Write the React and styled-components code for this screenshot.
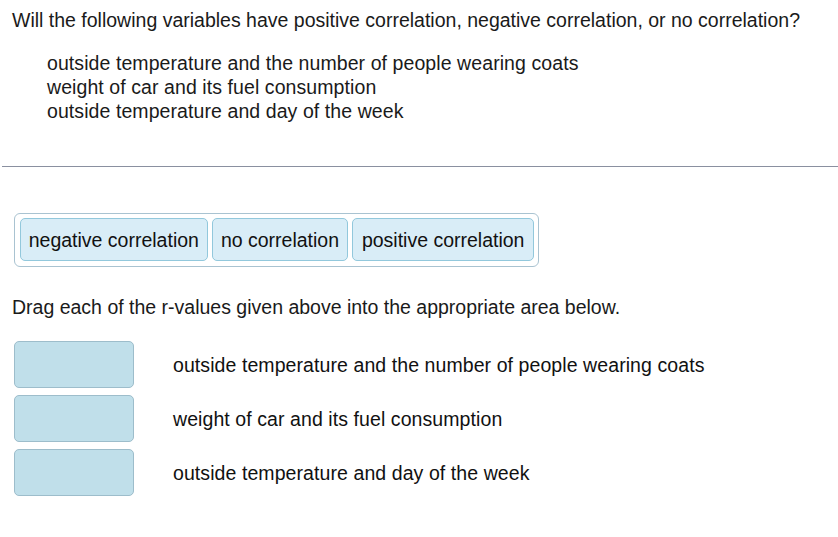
import React from "react";
import styled, { createGlobalStyle } from "styled-components";

const Global = createGlobalStyle`
  html, body { margin: 0; padding: 0; background: #fff; }
  body { font-family: "Liberation Sans", Arial, sans-serif; color: #1a1a1a; }
`;

const Page = styled.div`
  width: 838px;
  padding-top: 8px;
  font-size: 19.5px;
  line-height: 24px;
`;

const Question = styled.p`
  margin: 0 0 0 12px;
  white-space: nowrap;
`;

const ItemList = styled.div`
  margin: 19px 0 0 47px;
  display: flex;
  flex-direction: column;
  letter-spacing: 0.08px;
`;

const Divider = styled.div`
  margin: 43px 0 0 2px;
  height: 1px;
  background: #8a90a0;
`;

const Bank = styled.div`
  margin: 46px 0 0 14px;
  width: 525px;
  box-sizing: border-box;
  height: 54px;
  border: 1px solid #a9c3d1;
  border-radius: 6px;
  padding: 4px 4px 4px 5px;
  display: flex;
  gap: 4px;
`;

const Tile = styled.div`
  width: ${(p) => p.$w}px;
  box-sizing: border-box;
  height: 43px;
  border: 1px solid #92c8dc;
  border-radius: 5px;
  background: #d9edf7;
  display: flex;
  align-items: center;
  justify-content: center;
  color: #111;
  white-space: nowrap;
`;

const Instruction = styled.p`
  margin: 28px 0 0 12px;
`;

const Targets = styled.div`
  margin: 22px 0 0 14px;
  display: flex;
  flex-direction: column;
  gap: 7px;
`;

const TargetRow = styled.div`
  display: flex;
  align-items: center;
  gap: 39px;
`;

const DropBox = styled.div`
  width: 120px;
  height: 47px;
  box-sizing: border-box;
  border: 1px solid #9dbdcb;
  border-radius: 5px;
  background: #c0dfea;
  flex-shrink: 0;
`;

const TargetLabel = styled.span`
  color: #111;
  letter-spacing: 0.08px;
`;

const items = [
  "outside temperature and the number of people wearing coats",
  "weight of car and its fuel consumption",
  "outside temperature and day of the week",
];

const tiles = [
  { t: "negative correlation", w: 188 },
  { t: "no correlation", w: 137 },
  { t: "positive correlation", w: 182 },
];

export default function App() {
  return (
    <>
      <Global />
      <Page>
        <Question>
          Will the following variables have positive correlation, negative correlation, or no correlation?
        </Question>
        <ItemList>
          {items.map((i) => (
            <span key={i}>{i}</span>
          ))}
        </ItemList>
        <Divider />
        <Bank>
          {tiles.map((x) => (
            <Tile key={x.t} $w={x.w}>
              {x.t}
            </Tile>
          ))}
        </Bank>
        <Instruction>Drag each of the r-values given above into the appropriate area below.</Instruction>
        <Targets>
          {items.map((i) => (
            <TargetRow key={i}>
              <DropBox />
              <TargetLabel>{i}</TargetLabel>
            </TargetRow>
          ))}
        </Targets>
      </Page>
    </>
  );
}
